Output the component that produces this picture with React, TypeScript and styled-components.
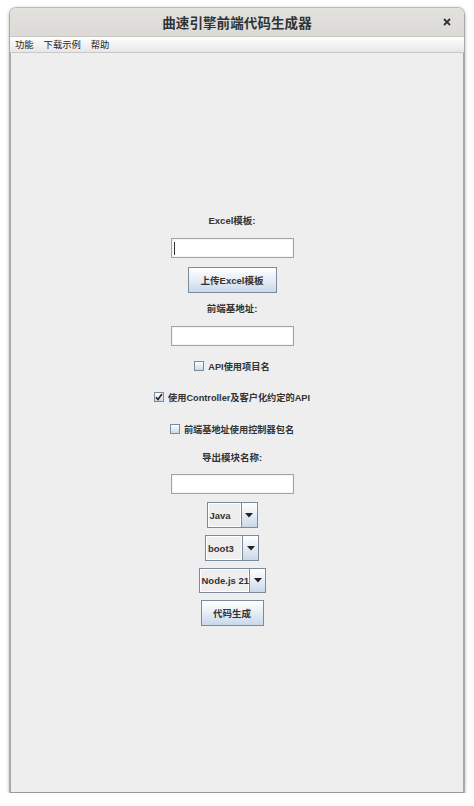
import React from "react";
import styled, { createGlobalStyle } from "styled-components";

const Global = createGlobalStyle`
  html, body { margin: 0; padding: 0; background: #ffffff; }
  body { font-family: "Liberation Sans", "Noto Sans CJK SC", sans-serif; }
`;

const Frame = styled.div`
  position: relative;
  margin: 8px 0 0 10px;
  width: 454px;
  height: 785px;
  display: flex;
  flex-direction: column;
  border-radius: 6px 6px 0 0;
  box-shadow: 0 1px 4px rgba(0, 0, 0, 0.45), 0 0 0 1px rgba(0, 0, 0, 0.18);
  background: #eeeeee;
  overflow: hidden;
`;

const TitleBar = styled.div`
  height: 28px;
  flex: none;
  display: flex;
  align-items: center;
  justify-content: center;
  background: linear-gradient(#e3e1de, #dcdad6);
  border-bottom: 1px solid #c9c6c1;
  position: relative;
`;

const Title = styled.div`
  font-family: "Noto Sans CJK SC", "Liberation Sans", sans-serif;
  font-weight: 700;
  font-size: 13.5px;
  color: #2e3436;
  letter-spacing: 0.1px;
`;

const CloseBtn = styled.div`
  position: absolute;
  right: 9px;
  top: 6px;
  width: 16px;
  height: 16px;
  display: flex;
  align-items: center;
  justify-content: center;
`;

const MenuBar = styled.div`
  height: 15px;
  flex: none;
  display: flex;
  align-items: center;
  padding-left: 4px;
  background: linear-gradient(#ffffff, #e6e6e6);
  border-bottom: 1px solid #c8c8c8;
`;

const MenuItem = styled.div`
  font-family: "Noto Sans CJK SC", sans-serif;
  font-size: 9.3px;
  color: #222222;
  padding: 0 5px 0 1px;
  margin-right: 4px;
  line-height: 15px;
`;

const Content = styled.div`
  flex: 1;
  display: flex;
  flex-direction: column;
  align-items: center;
  padding-top: 160px;
  padding-right: 10px;
  border-left: 1px solid #a8a8a8;
  border-right: 1px solid #a8a8a8;
  border-bottom: 1px solid #9a9a9a;
`;

const Label = styled.div<{ $mt?: number }>`
  margin-top: ${(p) => p.$mt ?? 0}px;
  height: 16px;
  line-height: 16px;
  font-weight: 700;
  font-size: 9.5px;
  color: #333333;
`;

const Field = styled.div<{ $mt?: number }>`
  margin-top: ${(p) => p.$mt ?? 0}px;
  box-sizing: border-box;
  width: 123px;
  height: 20px;
  background: #ffffff;
  border: 1px solid #a3a3a3;
  box-shadow: inset 0 0 0 1px #f4f4f4;
  display: flex;
  align-items: center;
  padding-left: 2px;
`;

const Caret = styled.div`
  width: 1px;
  height: 13px;
  background: #333333;
`;

const Button = styled.div<{ $mt?: number; $w: number }>`
  margin-top: ${(p) => p.$mt ?? 0}px;
  box-sizing: border-box;
  width: ${(p) => p.$w}px;
  height: 26px;
  display: flex;
  align-items: center;
  justify-content: center;
  font-weight: 700;
  font-size: 9.5px;
  color: #333333;
  border: 1px solid #7c8b99;
  background: linear-gradient(#ffffff 0%, #eef3f8 35%, #c9d9ea 100%);
`;

const CheckRow = styled.div<{ $mt?: number }>`
  margin-top: ${(p) => p.$mt ?? 0}px;
  height: 16px;
  display: flex;
  align-items: center;
  gap: 4px;
  font-weight: 700;
  font-size: 9.2px;
  color: #333333;
`;

const Box = styled.div`
  box-sizing: border-box;
  width: 10px;
  height: 10px;
  border: 1px solid #7c8b99;
  background: linear-gradient(#ffffff, #cbd9e8);
  display: flex;
  align-items: center;
  justify-content: center;
`;

const Combo = styled.div<{ $mt?: number; $w: number; $h: number }>`
  margin-top: ${(p) => p.$mt ?? 0}px;
  box-sizing: border-box;
  width: ${(p) => p.$w}px;
  height: ${(p) => p.$h}px;
  display: flex;
  border: 1px solid #7c8b99;
  background: #eeeeee;
`;

const ComboText = styled.div`
  flex: 1;
  display: flex;
  align-items: center;
  padding-left: 2px;
  font-weight: 700;
  font-size: 9.5px;
  color: #333333;
  box-shadow: inset 0 0 0 1px #ffffff;
  white-space: nowrap;
`;

const Arrow = styled.div`
  width: 15px;
  flex: none;
  border-left: 1px solid #7c8b99;
  background: linear-gradient(#ffffff 0%, #eef3f8 35%, #c9d9ea 100%);
  display: flex;
  align-items: center;
  justify-content: center;
`;

const Tri = () => (
  <svg width="8" height="5" viewBox="0 0 8 5">
    <path d="M0 0 H8 L4 4.5 Z" fill="#222222" />
  </svg>
);

const CheckMark = () => (
  <svg width="8" height="8" viewBox="0 0 8 8">
    <path d="M1 4.2 L3 6.5 L7 1" fill="none" stroke="#222" strokeWidth="1.6" />
  </svg>
);

export default function App() {
  return (
    <>
      <Global />
      <Frame>
        <TitleBar>
          <Title>曲速引擎前端代码生成器</Title>
          <CloseBtn>
            <svg width="8" height="8" viewBox="0 0 8 8">
              <path d="M1 1 L7 7 M7 1 L1 7" stroke="#2e3436" strokeWidth="1.8" />
            </svg>
          </CloseBtn>
        </TitleBar>
        <MenuBar>
          <MenuItem>功能</MenuItem>
          <MenuItem>下载示例</MenuItem>
          <MenuItem>帮助</MenuItem>
        </MenuBar>
        <Content>
          <Label>Excel模板:</Label>
          <Field $mt={9}>
            <Caret />
          </Field>
          <Button $mt={9} $w={89}>上传Excel模板</Button>
          <Label $mt={8}>前端基地址:</Label>
          <Field $mt={9} />
          <CheckRow $mt={12}>
            <Box />
            API使用项目名
          </CheckRow>
          <CheckRow $mt={15}>
            <Box>
              <CheckMark />
            </Box>
            使用Controller及客户化约定的API
          </CheckRow>
          <CheckRow $mt={16}>
            <Box />
            前端基地址使用控制器包名
          </CheckRow>
          <Label $mt={13}>导出模块名称:</Label>
          <Field $mt={8} />
          <Combo $mt={8} $w={51} $h={26}>
            <ComboText>Java</ComboText>
            <Arrow>
              <Tri />
            </Arrow>
          </Combo>
          <Combo $mt={7} $w={54} $h={26}>
            <ComboText>boot3</ComboText>
            <Arrow>
              <Tri />
            </Arrow>
          </Combo>
          <Combo $mt={7} $w={67} $h={25}>
            <ComboText>Node.js 21</ComboText>
            <Arrow>
              <Tri />
            </Arrow>
          </Combo>
          <Button $mt={7} $w={63}>代码生成</Button>
        </Content>
      </Frame>
    </>
  );
}
